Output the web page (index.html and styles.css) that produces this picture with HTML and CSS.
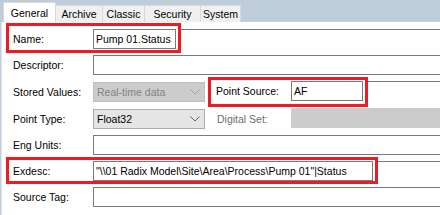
FILE: index.html
```html
<!DOCTYPE html>
<html lang="en">
<head>
    <meta charset="UTF-8">
    <title>Point Properties</title>
    <link rel="stylesheet" href="styles.css">
</head>
<body>
    <div class="tabs">
        <div class="tab tab-general active">General</div>
        <div class="tab tab-archive">Archive</div>
        <div class="tab tab-classic">Classic</div>
        <div class="tab tab-security">Security</div>
        <div class="tab tab-system">System</div>
    </div>

    <div class="panel">
        <div class="row row-name">
            <div class="mark mark-name">
                <span class="label">Name:</span>
                <div class="field field-name">Pump 01.Status</div>
            </div>
            <div class="tail tail-name"></div>
        </div>

        <div class="row row-plain row-descriptor">
            <span class="label">Descriptor:</span>
            <div class="field field-wide"></div>
        </div>

        <div class="row row-stored">
            <span class="label label-stored">Stored Values:</span>
            <div class="select select-disabled select-stored">
                <span>Real-time data</span>
                <svg class="chevron" width="10" height="6" viewBox="0 0 10 6"><polyline points="0.5,0.5 5,5 9.5,0.5" fill="none" stroke="#a0a0a0" stroke-width="1"/></svg>
            </div>
            <div class="mark mark-source">
                <span class="label label-source">Point Source:</span>
                <div class="field field-source">AF</div>
            </div>
            <div class="tail tail-source"></div>
        </div>

        <div class="row row-type">
            <span class="label">Point Type:</span>
            <div class="select select-type">
                <span>Float32</span>
                <svg class="chevron" width="10" height="6" viewBox="0 0 10 6"><polyline points="0.5,0.5 5,5 9.5,0.5" fill="none" stroke="#606060" stroke-width="1"/></svg>
            </div>
            <span class="label label-digital">Digital Set:</span>
            <div class="field field-disabled"></div>
        </div>

        <div class="row row-plain row-units">
            <span class="label">Eng Units:</span>
            <div class="field field-wide"></div>
        </div>

        <div class="row row-exdesc">
            <div class="mark mark-exdesc">
                <span class="label">Exdesc:</span>
                <div class="field field-exdesc">"\\01 Radix Model\Site\Area\Process\Pump 01"|Status</div>
            </div>
            <div class="tail tail-exdesc"></div>
        </div>

        <div class="row row-plain row-sourcetag">
            <span class="label">Source Tag:</span>
            <div class="field field-wide"></div>
        </div>
    </div>
</body>
</html>
```

FILE: styles.css
```css
/* Base */
body {
    margin: 0;
    width: 440px;
    height: 215px;
    overflow: hidden;
    background-color: #bfcddb;
    font-family: 'Liberation Sans', Arial, sans-serif;
    font-size: 10.5px;
    color: #000;
}

/* Tabs */
.tabs {
    display: flex;
    align-items: flex-end;
    height: 22px;
    padding-left: 3px;
}
.tab {
    box-sizing: border-box;
    height: 17px;
    line-height: 16px;
    text-align: center;
    background-color: #f0f0f0;
    border: 1px solid #d9d9d9;
    border-bottom: none;
    margin-left: -1px;
}
.tab.active {
    height: 20px;
    line-height: 20px;
    background-color: #fff;
    position: relative;
    z-index: 1;
}
.tab-general { width: 53px; margin-left: 0; }
.tab-archive { width: 48px; }
.tab-classic { width: 43px; }
.tab-security { width: 57px; }
.tab-system { width: 41px; }

/* Panel */
.panel {
    background-color: #fff;
    margin-left: 1px;
    border-left: 1px solid #dfe6ee;
    padding: 1px 0 0 4px;
    height: 192px;
}
.row {
    display: flex;
    align-items: flex-start;
}
.row-plain,
.row-stored,
.row-type {
    padding-left: 7px;
}
.label {
    width: 80px;
    flex-shrink: 0;
    white-space: nowrap;
}
.row-plain .label,
.row-type .label,
.label-stored {
    line-height: 20px;
}

/* Inputs */
.field {
    box-sizing: border-box;
    height: 20px;
    line-height: 18px;
    padding-left: 2px;
    border: 1px solid #7a7a7a;
    background-color: #fff;
    white-space: nowrap;
    overflow: hidden;
}
.field-wide {
    flex: 1;
    margin-right: -2px;
}
.field-name { width: 83px; }
.field-source { width: 72px; }
.field-exdesc { width: 280px; }
.field-disabled {
    flex: 1;
    margin-top: -1px;
    margin-right: -2px;
    background-color: #cccccc;
    border-color: #cccccc;
}

/* Dropdowns */
.select {
    box-sizing: border-box;
    width: 112px;
    height: 20px;
    display: flex;
    align-items: center;
    justify-content: space-between;
    padding: 0 4px 0 3px;
    border: 1px solid #acacac;
    background-color: #e5e5e5;
}
.select-disabled {
    background-color: #cccccc;
    border-color: #bfbfbf;
    color: #838383;
}
.select-stored { margin-top: 5px; }
.label-stored { margin-top: 5px; }

/* Red highlight boxes */
.mark {
    display: flex;
    align-items: flex-start;
    border: 3px solid #ed1c24;
}
.mark .label { line-height: 20px; }
.mark-name {
    padding: 3px 2px 1px 4px;
}
.mark-source {
    margin-left: 3px;
    padding: 1px 2px 3px 5px;
}
.mark-source .label { width: 75px; }
.mark-exdesc {
    padding: 1px 2px 0 4px;
}
.tail {
    flex: 1;
    border-top: 1px solid #7a7a7a;
}
.tail-name { margin-top: 6px; }
.tail-source { margin-top: 4px; }
.tail-exdesc { margin-top: 4px; }

.label-digital {
    width: 74px;
    margin-left: 12px;
    color: #6d6d6d;
}

/* Row spacing */
.row-descriptor { margin-top: 2px; }
.row-stored { margin-top: 2px; }
.row-type { margin-top: 2px; }
.row-units { margin-top: 6px; }
.row-exdesc { margin-top: 2px; }
.row-sourcetag { margin-top: 3px; }
```
